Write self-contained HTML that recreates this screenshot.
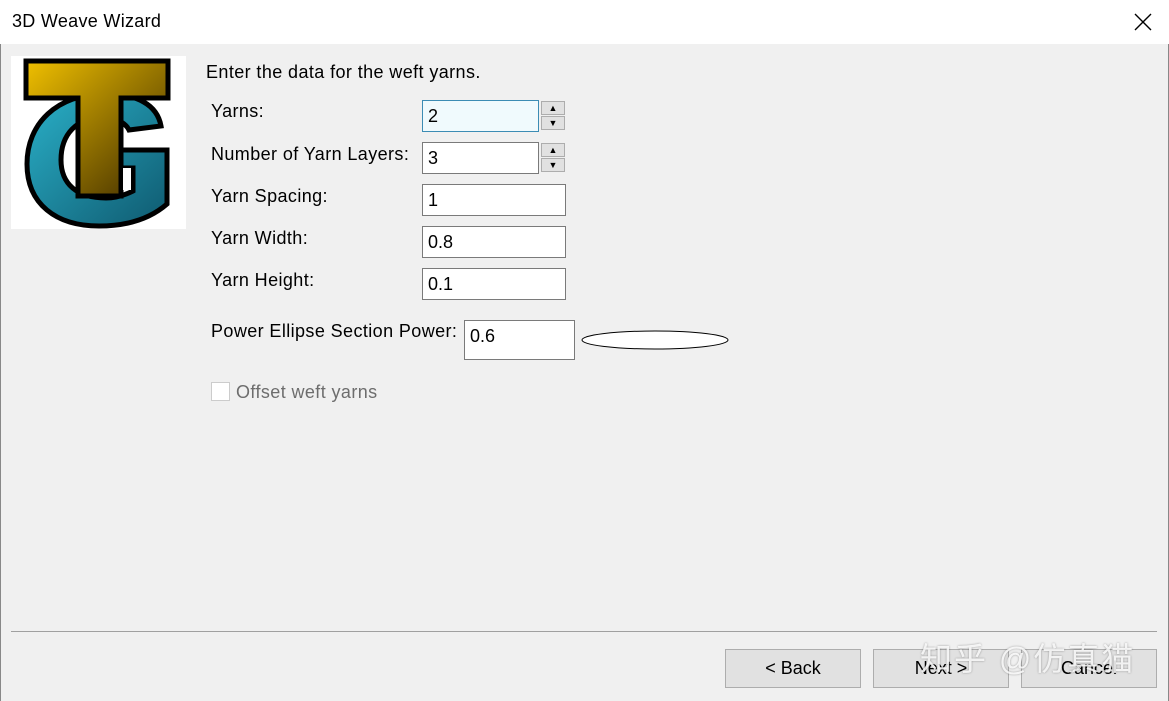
<!DOCTYPE html>
<html><head><style>
body{margin:0;width:1169px;height:701px;overflow:hidden;background:#f0f0f0;font-family:"Liberation Sans","Noto Sans CJK SC",sans-serif;position:relative;color:#000}
.a{position:absolute}
.t{font-size:18px;letter-spacing:0.4px}
.in{position:absolute;background:#fff;border:1px solid #7a7a7a;box-sizing:border-box;font-size:18px;padding-left:5px;line-height:30px}
.sp{position:absolute;width:24px;height:14px;background:#e1e1e1;border:1px solid #adadad;box-sizing:border-box;font-size:9px;text-align:center;line-height:12px}
.btn{position:absolute;top:649px;width:136px;height:39px;background:#e1e1e1;border:1px solid #adadad;box-sizing:border-box;font-size:18px;text-align:center;line-height:37px}
</style></head><body>
<div class="a" style="left:0;top:0;width:1169px;height:44px;background:#fff"></div>
<div class="a" style="left:12px;top:11px;font-size:18px;letter-spacing:0.3px">3D Weave Wizard</div>
<svg class="a" style="left:1134px;top:13px" width="18" height="18"><path d="M1 1L17 17M17 1L1 17" stroke="#000" stroke-width="1.4"/></svg>
<div class="a" style="left:0;top:44px;width:1px;height:657px;background:#888"></div>
<div class="a" style="left:1168px;top:44px;width:1px;height:657px;background:#888"></div>
<div class="a" style="left:11px;top:56px;width:175px;height:173px;background:#fff"></div>
<svg class="a" style="left:11px;top:56px" width="175" height="173" viewBox="0 0 175 173">
<defs><linearGradient id="g" x1="0" y1="0" x2="1" y2="1"><stop offset="0" stop-color="#2ab0c8"/><stop offset="1" stop-color="#0f5a70"/></linearGradient>
<linearGradient id="y" x1="0" y1="0" x2="1" y2="1"><stop offset="0" stop-color="#f0c000"/><stop offset="1" stop-color="#3a2800"/></linearGradient></defs>
<path d="M118 74 L150 70 C146 48 125 38 95 38 C45 38 16 68 16 108 C16 148 45 170 88 170 C118 170 140 162 156 148 L156 94 L95 94 L95 112 L122 112 L122 135 C112 140 104 142 95 142 C66 142 50 128 50 104 C50 78 66 62 90 62 C104 62 114 66 118 74Z" fill="url(#g)" stroke="#000" stroke-width="5"/>
<path d="M15 5 L157 5 L157 42 L110 42 L110 140 L67 140 L67 42 L15 42Z" fill="url(#y)" stroke="#000" stroke-width="5"/>
<rect x="112" y="112" width="8" height="22" fill="#fff"/>
</svg>
<div class="a t" style="left:206px;top:62px">Enter the data for the weft yarns.</div>
<div class="a t" style="left:211px;top:101px">Yarns:</div>
<div class="a t" style="left:211px;top:144px">Number of Yarn Layers:</div>
<div class="a t" style="left:211px;top:186px">Yarn Spacing:</div>
<div class="a t" style="left:211px;top:228px">Yarn Width:</div>
<div class="a t" style="left:211px;top:270px">Yarn Height:</div>
<div class="a t" style="left:211px;top:321px">Power Ellipse Section Power:</div>
<div class="in" style="left:422px;top:100px;width:117px;height:32px;border-color:#3c8cb4;background:#f0fafd">2</div>
<div class="sp" style="left:541px;top:101px">▲</div><div class="sp" style="left:541px;top:116px">▼</div>
<div class="in" style="left:422px;top:142px;width:117px;height:32px">3</div>
<div class="sp" style="left:541px;top:143px">▲</div><div class="sp" style="left:541px;top:158px">▼</div>
<div class="in" style="left:422px;top:184px;width:144px;height:32px">1</div>
<div class="in" style="left:422px;top:226px;width:144px;height:32px">0.8</div>
<div class="in" style="left:422px;top:268px;width:144px;height:32px">0.1</div>
<div class="in" style="left:464px;top:320px;width:111px;height:40px">0.6</div>
<svg class="a" style="left:580px;top:329px" width="150" height="22"><ellipse cx="75" cy="11" rx="73" ry="9" fill="#fff" stroke="#000" stroke-width="1"/></svg>
<div class="a" style="left:211px;top:382px;width:19px;height:19px;background:#fff;border:1px solid #ccc;box-sizing:border-box"></div>
<div class="a t" style="left:236px;top:382px;color:#6d6d6d">Offset weft yarns</div>
<div class="a" style="left:11px;top:631px;width:1146px;height:1px;background:#a0a0a0"></div>
<div class="btn" style="left:725px">&lt; Back</div>
<div class="btn" style="left:873px">Next &gt;</div>
<div class="btn" style="left:1021px">Cancel</div>
<div class="a" style="left:920px;top:634px;font-size:32px;letter-spacing:2px;color:rgba(255,255,255,0.85);text-shadow:0 0 2px rgba(0,0,0,0.35)">知乎 @仿真猫</div>
</body></html>
